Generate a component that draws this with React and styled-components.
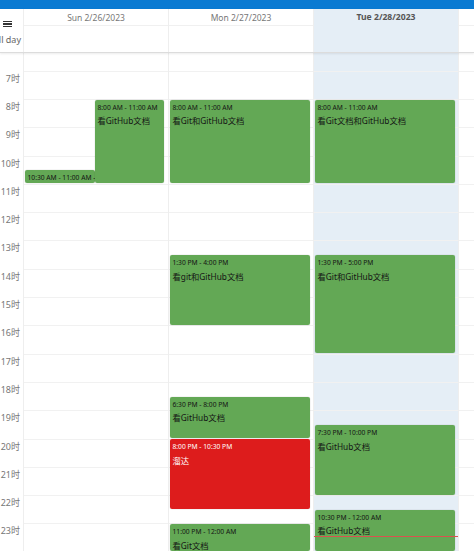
import styled, { createGlobalStyle } from 'styled-components';

const HOUR = 28.3;
const FIRST_HOUR = 6;
const HOURS = Array.from({ length: 18 }, (_, i) => FIRST_HOUR + i);

const GlobalStyle = createGlobalStyle`
  html, body {
    margin: 0;
    padding: 0;
    overflow: hidden;
    background: #fff;
    font-family: 'Noto Sans', 'Noto Sans CJK SC', sans-serif;
  }
`;

const TopBar = styled.div`
  height: 9px;
  background: #0a7ad2;
`;

const Header = styled.div`
  display: grid;
  grid-template-columns: 24px 145px 145px 145px 1fr;
  border-bottom: 1px solid #dcdcdc;
  box-shadow: 0 1px 2px rgba(0, 0, 0, 0.08);
  position: relative;
  z-index: 2;
`;

const HeaderGutter = styled.div`
  display: flex;
  flex-direction: column;
  align-items: flex-end;
  border-right: 1px solid #eeeeee;
`;

const Hamburger = styled.div`
  align-self: flex-start;
  margin: 12px 0 0 3px;
  width: 9px;
  height: 6px;
  display: flex;
  flex-direction: column;
  justify-content: space-between;
  span {
    display: block;
    height: 1.2px;
    background: #333;
  }
`;

const AllDay = styled.div`
  display: flex;
  justify-content: flex-end;
  width: 100%;
  padding-right: 2px;
  box-sizing: border-box;
  margin-top: 6px;
  white-space: nowrap;
  font-size: 9px;
  color: #666;
`;

const DayHead = styled.div`
  display: flex;
  flex-direction: column;
  border-right: ${(p) => (p.$last ? 'none' : '1px solid #eeeeee')};
  background: ${(p) => (p.$today ? '#e5eef6' : '#fff')};
`;

const DayLabel = styled.div`
  height: 16px;
  line-height: 17px;
  text-align: center;
  font-size: ${(p) => (p.$today ? '8.6px' : '8.5px')};
  color: ${(p) => (p.$today ? '#555' : '#777')};
  font-weight: ${(p) => (p.$today ? 700 : 400)};
  border-bottom: 1px solid ${(p) => (p.$today ? 'transparent' : '#f0f0f0')};
`;

const AllDayCell = styled.div`
  height: 26px;
`;

const Body = styled.div`
  height: 498px;
  overflow: hidden;
`;

const BodyGrid = styled.div`
  display: grid;
  grid-template-columns: 24px 145px 145px 145px 1fr;
  margin-top: -10.6px;
`;

const Gutter = styled.div`
  border-right: 1px solid #eeeeee;
`;

const HourLabel = styled.div`
  height: ${HOUR}px;
  box-sizing: border-box;
  padding: 2px 3px 0 0;
  text-align: right;
  font-size: 9px;
  color: #777;
  line-height: 12px;
`;

const DayColumn = styled.div`
  position: relative;
  border-right: ${(p) => (p.$last ? 'none' : '1px solid #eeeeee')};
  background: ${(p) => (p.$today ? '#e5eef6' : '#fff')};
`;

const Slot = styled.div`
  height: ${HOUR}px;
  box-sizing: border-box;
  border-top: 1px solid #f1f1f1;
`;

const Event = styled.div`
  position: absolute;
  box-sizing: border-box;
  border-radius: 2px;
  padding: 2px 2px 0 2.5px;
  overflow: hidden;
  background: ${(p) => (p.$red ? '#dd1c1c' : '#63a855')};
  color: ${(p) => (p.$red ? '#fff' : '#141414')};
  box-shadow: 0 0 0 0.5px rgba(0, 0, 0, 0.08);
`;

const EventTime = styled.div`
  font-size: 6.7px;
  line-height: 11px;
  white-space: nowrap;
`;

const EventTitle = styled.div`
  font-size: 8.3px;
  line-height: 12px;
  margin-top: 2.6px;
  white-space: nowrap;
`;

const NowLine = styled.div`
  position: absolute;
  left: 0;
  right: 0;
  height: 1px;
  background: #d9534f;
  z-index: 3;
`;

const days = [
  { label: 'Sun 2/26/2023' },
  { label: 'Mon 2/27/2023' },
  { label: 'Tue 2/28/2023', today: true },
];

const events = [
  [
    { start: 10.5, end: 11, time: '10:30 AM - 11:00 AM - ', title: '', left: 1, width: 70 },
    { start: 8, end: 11, time: '8:00 AM - 11:00 AM', title: '看GitHub文档', left: 71, width: 69 },
  ],
  [
    { start: 8, end: 11, time: '8:00 AM - 11:00 AM', title: '看Git和GitHub文档' },
    { start: 13.5, end: 16, time: '1:30 PM - 4:00 PM', title: '看git和GitHub文档' },
    { start: 18.5, end: 20, time: '6:30 PM - 8:00 PM', title: '看GitHub文档' },
    { start: 20, end: 22.5, time: '8:00 PM - 10:30 PM', title: '溜达', red: true },
    { start: 23, end: 24, time: '11:00 PM - 12:00 AM', title: '看Git文档' },
  ],
  [
    { start: 8, end: 11, time: '8:00 AM - 11:00 AM', title: '看Git文档和GitHub文档' },
    { start: 13.5, end: 17, time: '1:30 PM - 5:00 PM', title: '看Git和GitHub文档' },
    { start: 19.5, end: 22, time: '7:30 PM - 10:00 PM', title: '看GitHub文档' },
    { start: 22.5, end: 24, time: '10:30 PM - 12:00 AM', title: '看GitHub文档' },
  ],
];

const top = (h) => (h - FIRST_HOUR) * HOUR;

function App() {
  return (
    <>
      <GlobalStyle />
      <TopBar />
      <Header>
        <HeaderGutter>
          <Hamburger>
            <span />
            <span />
            <span />
          </Hamburger>
          <AllDay>All day</AllDay>
        </HeaderGutter>
        {days.map((d) => (
          <DayHead key={d.label} $today={d.today}>
            <DayLabel $today={d.today}>{d.label}</DayLabel>
            <AllDayCell />
          </DayHead>
        ))}
        <DayHead $last>
          <DayLabel />
          <AllDayCell />
        </DayHead>
      </Header>
      <Body>
        <BodyGrid>
          <Gutter>
            {HOURS.map((h) => (
              <HourLabel key={h}>{h === FIRST_HOUR ? '' : `${h}时`}</HourLabel>
            ))}
          </Gutter>
          {days.map((d, i) => (
            <DayColumn key={d.label} $today={d.today}>
              {HOURS.map((h) => (
                <Slot key={h} />
              ))}
              {events[i].map((e) => (
                <Event
                  key={e.time}
                  $red={e.red}
                  style={{
                    top: top(e.start) + 0.5,
                    height: (e.end - e.start) * HOUR - 1,
                    left: e.left ?? 1,
                    width: e.width ?? 140,
                  }}
                >
                  <EventTime>{e.time}</EventTime>
                  {e.title && <EventTitle>{e.title}</EventTitle>}
                </Event>
              ))}
              {d.today && <NowLine style={{ top: top(23.45) }} />}
            </DayColumn>
          ))}
          <DayColumn $last>
            {HOURS.map((h) => (
              <Slot key={h} />
            ))}
          </DayColumn>
        </BodyGrid>
      </Body>
    </>
  );
}

export default App;
